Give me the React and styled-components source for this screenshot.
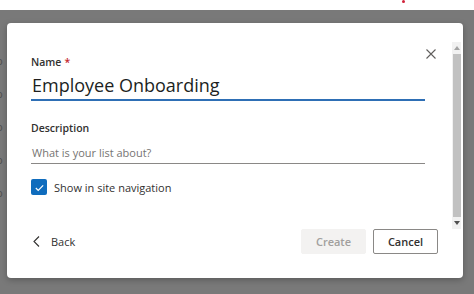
import React from "react";
import styled, { createGlobalStyle } from "styled-components";

const Global = createGlobalStyle`
  html, body {
    margin: 0;
    padding: 0;
    width: 474px;
    height: 294px;
    overflow: hidden;
    background: #7a7a7a;
    font-family: "Open Sans", "Noto Sans", sans-serif;
  }
`;

const TopStrip = styled.div`
  height: 10px;
  background: #ffffff;
  position: relative;
`;

const RedDot = styled.span`
  position: absolute;
  left: 402px;
  top: 0;
  width: 3px;
  height: 3px;
  border-radius: 50%;
  background: #d0223a;
`;

const Overlay = styled.div`
  height: 284px;
  background: #797979;
  display: flex;
  padding-top: 13px;
  box-sizing: border-box;
`;

const Gutter = styled.div`
  width: 7px;
  flex-shrink: 0;
  overflow: hidden;
  display: flex;
  flex-direction: column;
  padding-top: 32px;
  gap: 21px;
  color: #4f4f4f;
  font-size: 11px;
  line-height: 12px;
  text-indent: -4px;
`;

const Dialog = styled.div`
  width: 456px;
  height: 255px;
  flex-shrink: 0;
  background: #ffffff;
  border-radius: 4px;
  box-shadow: 0 2px 6px rgba(0, 0, 0, 0.25);
  display: flex;
  flex-direction: column;
`;

const Main = styled.div`
  flex: 1;
  display: flex;
`;

const Content = styled.div`
  width: 394px;
  flex-shrink: 0;
  padding: 32px 0 0 24px;
  display: flex;
  flex-direction: column;
`;

const Label = styled.div`
  font-size: 10.5px;
  font-weight: 600;
  color: #323130;
  line-height: 14px;
`;

const Req = styled.span`
  color: #c4262e;
  margin-left: 3px;
`;

const Field = styled.div`
  border-bottom: ${p => (p.active ? "2px solid #2e6fb5" : "1px solid #8a8886")};
  font-size: ${p => (p.big ? "18px" : "11px")};
  color: ${p => (p.big ? "#201f1e" : "#767472")};
  line-height: ${p => (p.big ? "28px" : "20px")};
  margin-top: ${p => (p.big ? "2px" : "8px")};
  padding-left: 1px;
  margin-bottom: ${p => p.gap || 0}px;
`;

const CheckRow = styled.label`
  display: flex;
  align-items: center;
  gap: 7px;
  margin-top: 15px;
  font-size: 11px;
  color: #323130;
`;

const Box = styled.span`
  width: 16px;
  height: 16px;
  border-radius: 2px;
  background: #0f6cbd;
  display: flex;
  align-items: center;
  justify-content: center;
`;

const CloseCol = styled.div`
  width: 10px;
  flex-shrink: 0;
  display: flex;
  align-items: flex-start;
  padding-top: 26px;
  margin-left: 1px;
`;

const ScrollBar = styled.div`
  width: 9px;
  flex-shrink: 0;
  margin: 19px 2px 0 16px;
  height: 187px;
  background: #f1f1f1;
  display: flex;
  flex-direction: column;
  align-items: center;
`;

const Arrow = styled.div`
  height: 12px;
  display: flex;
  align-items: center;
  justify-content: center;
`;

const Thumb = styled.div`
  flex: 1;
  width: 8px;
  background: #c1c1c1;
`;

const Footer = styled.div`
  height: 50px;
  display: flex;
  align-items: flex-start;
  padding: 0 25px 0 26px;
`;

const BackLink = styled.div`
  display: flex;
  align-items: center;
  gap: 11px;
  font-size: 11px;
  color: #323130;
  height: 25px;
  flex: 1;
`;

const Button = styled.button`
  width: 65px;
  height: 25px;
  box-sizing: border-box;
  border-radius: 2px;
  font-family: inherit;
  font-size: 11px;
  font-weight: 600;
  padding: 0;
  margin-left: ${p => p.gap || 0}px;
  border: ${p => (p.disabled ? "1px solid #f3f2f1" : "1px solid #8a8886")};
  background: ${p => (p.disabled ? "#f3f2f1" : "#ffffff")};
  color: ${p => (p.disabled ? "#a19f9d" : "#323130")};
`;

export default function App() {
  return (
    <>
      <Global />
      <TopStrip>
        <RedDot />
      </TopStrip>
      <Overlay>
        <Gutter>
          <span>b</span>
          <span>b</span>
          <span>b</span>
          <span>b</span>
          <span>b</span>
        </Gutter>
        <Dialog>
          <Main>
            <Content>
              <Label>
                Name<Req>*</Req>
              </Label>
              <Field big active gap={20}>Employee Onboarding</Field>
              <Label>Description</Label>
              <Field>What is your list about?</Field>
              <CheckRow>
                <Box>
                  <svg width="11" height="11" viewBox="0 0 12 12">
                    <path d="M2 6.5l2.6 2.6L10 3.6" fill="none" stroke="#fff" strokeWidth="1.3" />
                  </svg>
                </Box>
                Show in site navigation
              </CheckRow>
            </Content>
            <CloseCol>
              <svg width="10" height="10" viewBox="0 0 10 10">
                <path d="M0.5 0.5l9 9M9.5 0.5l-9 9" stroke="#605e5c" strokeWidth="1.1" />
              </svg>
            </CloseCol>
            <ScrollBar>
              <Arrow>
                <svg width="6" height="4" viewBox="0 0 6 4">
                  <path d="M0 4L3 0L6 4Z" fill="#a3a3a3" />
                </svg>
              </Arrow>
              <Thumb />
              <Arrow>
                <svg width="6" height="4" viewBox="0 0 6 4">
                  <path d="M0 0L3 4L6 0Z" fill="#505050" />
                </svg>
              </Arrow>
            </ScrollBar>
          </Main>
          <Footer>
            <BackLink>
              <svg width="7" height="11" viewBox="0 0 7 11">
                <path d="M6 0.5L1 5.5L6 10.5" fill="none" stroke="#323130" strokeWidth="1.1" />
              </svg>
              Back
            </BackLink>
            <Button disabled>Create</Button>
            <Button gap={7}>Cancel</Button>
          </Footer>
        </Dialog>
      </Overlay>
    </>
  );
}
